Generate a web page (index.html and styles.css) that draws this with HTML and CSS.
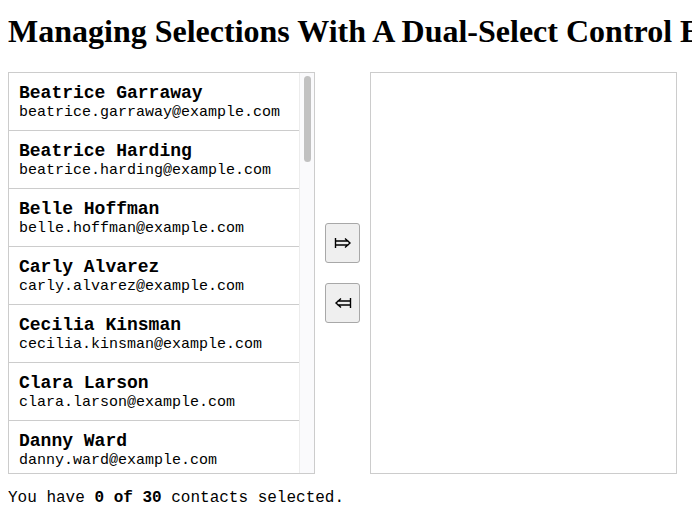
FILE: index.html
```html
<!DOCTYPE html>
<html lang="en">
<head>
    <meta charset="UTF-8">
    <meta name="viewport" content="width=device-width, initial-scale=1.0">
    <title>Dual-Select Control</title>
    <link rel="stylesheet" href="styles.css">
</head>
<body>

    <h1>Managing Selections With A Dual-Select Control Experiment</h1>

    <!-- Dual select -->
    <div class="dual-select">

        <div class="list-box">
            <ul class="list available">
                <li><strong>Beatrice Garraway</strong><span>beatrice.garraway@example.com</span></li>
                <li><strong>Beatrice Harding</strong><span>beatrice.harding@example.com</span></li>
                <li><strong>Belle Hoffman</strong><span>belle.hoffman@example.com</span></li>
                <li><strong>Carly Alvarez</strong><span>carly.alvarez@example.com</span></li>
                <li><strong>Cecilia Kinsman</strong><span>cecilia.kinsman@example.com</span></li>
                <li><strong>Clara Larson</strong><span>clara.larson@example.com</span></li>
                <li><strong>Danny Ward</strong><span>danny.ward@example.com</span></li>
                <li><strong>Dennis Carter</strong><span>dennis.carter@example.com</span></li>
                <li><strong>Dora Pruitt</strong><span>dora.pruitt@example.com</span></li>
                <li><strong>Edgar Moreno</strong><span>edgar.moreno@example.com</span></li>
                <li><strong>Elena Russo</strong><span>elena.russo@example.com</span></li>
                <li><strong>Felix Grant</strong><span>felix.grant@example.com</span></li>
                <li><strong>Gina Wallace</strong><span>gina.wallace@example.com</span></li>
                <li><strong>Harold Bishop</strong><span>harold.bishop@example.com</span></li>
                <li><strong>Ivy Chen</strong><span>ivy.chen@example.com</span></li>
                <li><strong>Jack Morrison</strong><span>jack.morrison@example.com</span></li>
                <li><strong>Karen Holt</strong><span>karen.holt@example.com</span></li>
                <li><strong>Leo Fischer</strong><span>leo.fischer@example.com</span></li>
                <li><strong>Maria Lopez</strong><span>maria.lopez@example.com</span></li>
                <li><strong>Nathan Price</strong><span>nathan.price@example.com</span></li>
                <li><strong>Olivia Stone</strong><span>olivia.stone@example.com</span></li>
                <li><strong>Peter Quinn</strong><span>peter.quinn@example.com</span></li>
                <li><strong>Rachel Adams</strong><span>rachel.adams@example.com</span></li>
                <li><strong>Samuel Reyes</strong><span>samuel.reyes@example.com</span></li>
                <li><strong>Tara Nolan</strong><span>tara.nolan@example.com</span></li>
                <li><strong>Uma Patel</strong><span>uma.patel@example.com</span></li>
                <li><strong>Victor Hale</strong><span>victor.hale@example.com</span></li>
                <li><strong>Wendy Brooks</strong><span>wendy.brooks@example.com</span></li>
                <li><strong>Xavier Dunn</strong><span>xavier.dunn@example.com</span></li>
                <li><strong>Zoe Mitchell</strong><span>zoe.mitchell@example.com</span></li>
            </ul>
            <!-- scroll track -->
            <div class="scrollbar"><div class="thumb"></div></div>
        </div>

        <div class="actions">
            <button type="button" title="Add selected">
                <svg width="18" height="12" viewBox="0 0 18 12" fill="none" stroke="#000" stroke-width="1.4">
                    <path d="M1.5 1v10M1.5 4h13M1.5 8h13M11 1.5l5 4.5-5 4.5"/>
                </svg>
            </button>
            <button type="button" title="Remove selected">
                <svg width="18" height="12" viewBox="0 0 18 12" fill="none" stroke="#000" stroke-width="1.4">
                    <path d="M16.5 1v10M16.5 4h-13M16.5 8h-13M7 1.5l-5 4.5 5 4.5"/>
                </svg>
            </button>
        </div>

        <div class="list-box">
            <ul class="list selected"></ul>
        </div>
    </div>

    <p class="status">You have <strong>0 of 30</strong> contacts selected.</p>

</body>
</html>
```

FILE: styles.css
```css
* {
    box-sizing: border-box;
}

body {
    margin: 8px;
    background-color: #ffffff;
    color: #000000;
    font-family: 'Liberation Serif', 'Times New Roman', serif;
}

h1 {
    margin: 5px -8px 22px 0;
    font-size: 32px;
    white-space: nowrap;
    overflow: hidden;
}

/* Dual select layout */
.dual-select {
    display: flex;
    height: 402px;
}

.list-box {
    display: flex;
    width: 307px;
    border: 1px solid #cccccc;
}

.list {
    flex: 1;
    margin: 0;
    padding: 0;
    list-style: none;
    overflow: hidden;
    font-family: 'Liberation Mono', 'Courier New', monospace;
}

.list li {
    padding: 10px 10px 7px;
    border-bottom: 1px solid #cccccc;
    cursor: pointer;
}

.list strong {
    display: block;
    font-size: 18px;
    line-height: 20px;
}

.list span {
    display: block;
    font-size: 15px;
    line-height: 20px;
}

/* fake scrollbar */
.scrollbar {
    flex: 0 0 15px;
    padding: 3px 3px 0 4px;
    background-color: #fafafc;
    border-left: 1px solid #ececec;
}

.thumb {
    height: 86px;
    border-radius: 4px;
    background-color: #c1c1c1;
}

/* Move buttons */
.actions {
    flex: 0 0 55px;
    display: flex;
    flex-direction: column;
    justify-content: center;
    align-items: center;
    gap: 20px;
}

.actions button {
    display: flex;
    align-items: center;
    justify-content: center;
    width: 35px;
    height: 40px;
    padding: 0;
    border: 1px solid #a8a8a8;
    border-radius: 3px;
    background-color: #efefef;
}

.status {
    margin: 15px 0 0;
    font-family: 'Liberation Mono', 'Courier New', monospace;
    font-size: 16px;
}
```
